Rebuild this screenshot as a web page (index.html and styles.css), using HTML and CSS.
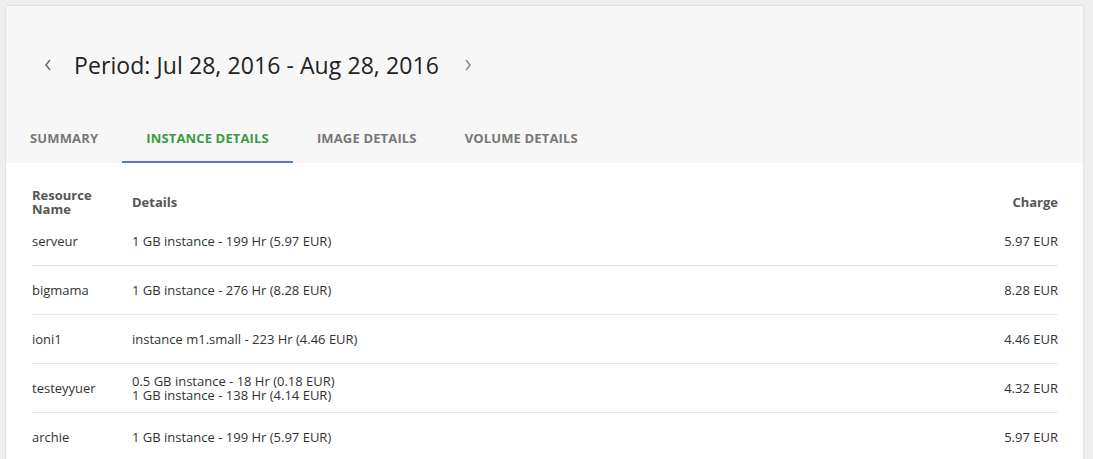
FILE: index.html
```html
<!DOCTYPE html>
<html>
<head>
<meta charset="utf-8">
<link rel="stylesheet" href="styles.css">
</head>
<body>
<div class="card">
  <div class="card-head">
    <div class="period">
      <span class="chev">
        <svg width="10" height="14" viewBox="0 0 10 14"><path d="M7 2 L3 7 L7 12" fill="none" stroke="#6b7078" stroke-width="1.6"/></svg>
      </span>
      <h1 class="period-title">Period: Jul 28, 2016 - Aug 28, 2016</h1>
      <span class="chev">
        <svg width="10" height="14" viewBox="0 0 10 14"><path d="M3 2 L7 7 L3 12" fill="none" stroke="#8a8e94" stroke-width="1.6"/></svg>
      </span>
    </div>
    <nav class="tabs">
      <a class="tab">SUMMARY</a>
      <a class="tab active">INSTANCE DETAILS</a>
      <a class="tab">IMAGE DETAILS</a>
      <a class="tab">VOLUME DETAILS</a>
    </nav>
  </div>
  <div class="card-body">
    <div class="thead">
      <div class="c-name"><div class="ln">Resource</div><div class="ln">Name</div></div>
      <div class="c-det">Details</div>
      <div class="c-chg">Charge</div>
    </div>
    <div class="row">
      <div class="c-name">serveur</div>
      <div class="c-det">1 GB instance - 199 Hr (5.97 EUR)</div>
      <div class="c-chg">5.97 EUR</div>
    </div>
    <div class="row">
      <div class="c-name">bigmama</div>
      <div class="c-det">1 GB instance - 276 Hr (8.28 EUR)</div>
      <div class="c-chg">8.28 EUR</div>
    </div>
    <div class="row">
      <div class="c-name">ioni1</div>
      <div class="c-det">instance m1.small - 223 Hr (4.46 EUR)</div>
      <div class="c-chg">4.46 EUR</div>
    </div>
    <div class="row">
      <div class="c-name">testeyyuer</div>
      <div class="c-det"><div class="ln">0.5 GB instance - 18 Hr (0.18 EUR)</div><div class="ln">1 GB instance - 138 Hr (4.14 EUR)</div></div>
      <div class="c-chg">4.32 EUR</div>
    </div>
    <div class="row">
      <div class="c-name">archie</div>
      <div class="c-det">1 GB instance - 199 Hr (5.97 EUR)</div>
      <div class="c-chg">5.97 EUR</div>
    </div>
  </div>
</div>
</body>
</html>
```

FILE: styles.css
```css
html, body {
  margin: 0;
  padding: 0;
  background: #efefef;
  font-family: "Open Sans", "Liberation Sans", sans-serif;
  color: #333;
}
body {
  padding: 6px 0 0 6px;
  height: 453px;
  overflow: hidden;
}
.card {
  width: 1077px;
  background: #fff;
  box-shadow: 0 0 2px rgba(0,0,0,0.15);
}
.card-head {
  background: #f7f7f7;
}
.period {
  display: flex;
  align-items: center;
  height: 118px;
  padding-left: 37px;
  box-sizing: border-box;
  padding-bottom: 1px;
}
.chev {
  display: flex;
  align-items: center;
  width: 10px;
}
.period-title {
  margin: 0 24px 0 21px;
  font-weight: 400;
  font-size: 23px;
  color: #222;
  letter-spacing: 0.08px;
}
.tabs {
  display: flex;
  height: 39px;
}
.tab {
  padding: 0 24px 9px;
  font-size: 13px;
  font-weight: 700;
  color: #777;
  display: flex;
  align-items: center;
  border-bottom: 2px solid transparent;
  box-sizing: border-box;
  letter-spacing: 0.15px;
}
.tab.active {
  color: #3d9a43;
  border-bottom-color: #5a6ef2;
}
.card-body {
  padding: 0 25px 0 26px;
}
.thead {
  display: flex;
  align-items: center;
  padding: 25px 0 1px;
  font-weight: 700;
  color: #555;
  font-size: 13px;
  line-height: 14px;
}
.row {
  display: flex;
  align-items: center;
  height: 49px;
  box-sizing: border-box;
  border-bottom: 1px solid #e6e6e6;
  font-size: 13px;
  color: #333;
}
.ln {
  height: 14px;
  line-height: 14px;
  white-space: nowrap;
}
.c-name { width: 100px; }
.c-det { flex: 1; }
.c-chg { text-align: right; }
```
